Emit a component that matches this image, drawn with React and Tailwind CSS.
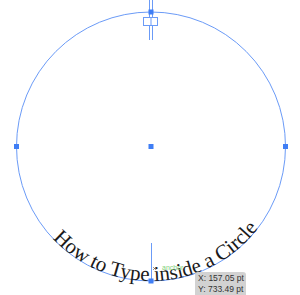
import React from 'react';

const BLUE = '#6b9bf7';
const HANDLE = '#3f7ef5';

const App = () => {
  const cx = 151;
  const cy = 146.5;
  const r = 134.5;

  return (
    <div className="relative w-[300px] h-[295px] bg-white overflow-hidden">
      <svg width="300" height="295" viewBox="0 0 300 295" className="block">
        <defs>
          <path id="bottomArc" d={`M ${cx - r} ${cy} A ${r} ${r} 0 0 0 ${cx + r} ${cy}`} />
        </defs>

        {/* the circle path */}
        <circle cx={cx} cy={cy} r={r} fill="none" stroke={BLUE} strokeWidth="1" />

        {/* top in-port / out-port marks */}
        <line x1="149.5" y1="0" x2="149.5" y2="40" stroke={BLUE} strokeWidth="1" />
        <line x1="152.5" y1="0" x2="152.5" y2="40" stroke={BLUE} strokeWidth="1" />
        <rect x="143.5" y="17.5" width="14" height="8" fill="white" stroke={BLUE} strokeWidth="1" />
        <line x1="151" y1="17" x2="151" y2="26" stroke={BLUE} strokeWidth="1" />

        {/* bottom bracket line */}
        <line x1="151.5" y1="243" x2="151.5" y2="281" stroke={BLUE} strokeWidth="1" />

        {/* anchor handles */}
        <rect x={cx - 2.5} y={cy - r - 2.5} width="5" height="5" fill={HANDLE} />
        <rect x={cx - r - 2.5} y={cy - 2.5} width="5" height="5" fill={HANDLE} />
        <rect x={cx + r - 2.5} y={cy - 2.5} width="5" height="5" fill={HANDLE} />
        <rect x={cx - 2.5} y={cy - 2.5} width="5" height="5" fill={HANDLE} />
        <rect x={cx - 2.5} y={cy + r - 2.5} width="5" height="5" fill={HANDLE} />

        {/* type on path */}
        <text fill="#1a1a1a" className="font-['Liberation_Serif','DejaVu_Serif',serif] text-[21px]">
          <textPath href="#bottomArc" startOffset="101" textLength="234" lengthAdjust="spacing">
            How to Type inside a Circle
          </textPath>
        </text>

        {/* cursor cross */}
        <path d="M153 267 l3 3 M156 267 l-3 3" stroke="#555" strokeWidth="0.6" />
      </svg>

      <span className="absolute left-[162px] top-[264px] text-[7px] leading-none text-[#7fd07a] font-['Liberation_Sans',Arial,sans-serif]">
        anchor
      </span>

      <div className="absolute left-[195px] top-[272px] w-[51px] h-[30px] rounded-[3px] bg-[#d2d2d2] pl-[3px] pt-[1px] text-[8.5px] leading-[11px] text-[#333] whitespace-nowrap font-['Liberation_Sans',Arial,sans-serif]">
        <div>X: 157.05 pt</div>
        <div>Y: 733.49 pt</div>
      </div>
    </div>
  );
};

export default App;
